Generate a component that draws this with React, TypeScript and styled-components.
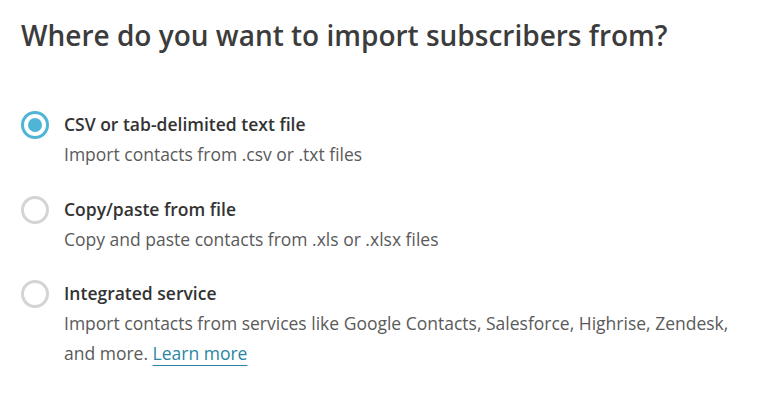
import React from "react";
import styled, { createGlobalStyle } from "styled-components";

const GlobalStyle = createGlobalStyle`
  body {
    margin: 0;
    background: #ffffff;
    font-family: "Open Sans", "Liberation Sans", sans-serif;
  }
`;

const Page = styled.div`
  padding: 17px 21px 0 21px;
`;

const Title = styled.h1`
  margin: 0 0 56px 0;
  font-size: 28px;
  line-height: 36px;
  font-weight: 600;
  color: #3c3c3c;
`;

const Options = styled.div`
  display: flex;
  flex-direction: column;
  gap: 24px;
`;

const Option = styled.label`
  display: grid;
  grid-template-columns: 28px 1fr;
  column-gap: 15px;
  align-items: start;
  cursor: pointer;
`;

const Radio = styled.span<{ $checked?: boolean }>`
  width: 28px;
  height: 28px;
  box-sizing: border-box;
  border-radius: 50%;
  border: 3px solid ${({ $checked }) => ($checked ? "#4fb5d6" : "#d4d4d4")};
  display: flex;
  align-items: center;
  justify-content: center;
  margin-top: 2px;

  &::after {
    content: "";
    display: ${({ $checked }) => ($checked ? "block" : "none")};
    width: 14px;
    height: 14px;
    border-radius: 50%;
    background: #4fb5d6;
  }
`;

const Body = styled.div`
  display: flex;
  flex-direction: column;
  max-width: 690px;
`;

const Label = styled.div`
  font-size: 17.5px;
  line-height: 31px;
  font-weight: 600;
  color: #333333;
`;

const Desc = styled.div`
  font-size: 17.5px;
  line-height: 29.5px;
  color: #5a5a5a;
  padding-right: 8px;
`;

const Link = styled.a`
  color: #2a86a3;
  text-decoration: underline;
  text-decoration-thickness: 1px;
  text-underline-offset: 5px;
`;

export default function App() {
  return (
    <>
      <GlobalStyle />
      <Page>
        <Title>Where do you want to import subscribers from?</Title>
        <Options>
          <Option>
            <Radio $checked />
            <Body>
              <Label>CSV or tab-delimited text file</Label>
              <Desc>Import contacts from .csv or .txt files</Desc>
            </Body>
          </Option>
          <Option>
            <Radio />
            <Body>
              <Label>Copy/paste from file</Label>
              <Desc>Copy and paste contacts from .xls or .xlsx files</Desc>
            </Body>
          </Option>
          <Option>
            <Radio />
            <Body>
              <Label>Integrated service</Label>
              <Desc>
                Import contacts from services like Google Contacts, Salesforce, Highrise, Zendesk,
                and more. <Link href="#">Learn more</Link>
              </Desc>
            </Body>
          </Option>
        </Options>
      </Page>
    </>
  );
}
